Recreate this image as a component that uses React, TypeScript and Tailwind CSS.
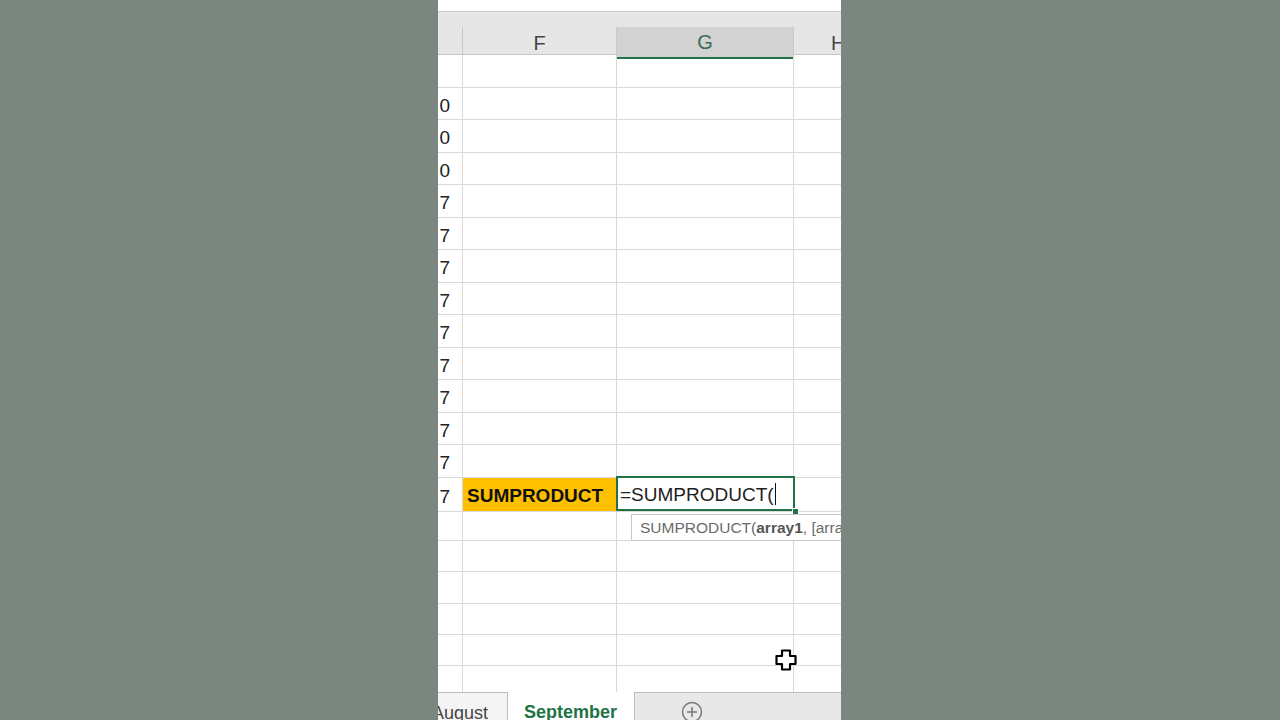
import React from "react";

const font = { fontFamily: '"Liberation Sans", Arial, sans-serif' };

const topRows = ["", "0", "0", "0", "7", "7", "7", "7", "7", "7", "7", "7", "7"];

function GridRow({ e, h }: { e?: string; h: string }) {
  return (
    <div className={`grid grid-cols-[25px_154px_177px_47px] ${h}`}>
      <div className="border-r border-b border-[#d9d9d9] flex items-center justify-end pr-[12px] pt-[5px] overflow-hidden text-[19px] text-[#222]">
        {e}
      </div>
      <div className="border-r border-b border-[#d9d9d9]" />
      <div className="border-r border-b border-[#d9d9d9]" />
      <div className="border-b border-[#d9d9d9]" />
    </div>
  );
}

function PlusCursor() {
  return (
    <svg width="24" height="24" viewBox="0 0 24 24" className="absolute left-[774px] top-[648px]">
      <path
        d="M8 2.5h8v5.5h5.5v8H16v5.5H8V16H2.5V8H8z"
        fill="#fff"
        stroke="#000"
        strokeWidth="2.2"
        strokeLinejoin="round"
      />
    </svg>
  );
}

export default function App() {
  return (
    <div className="relative w-[1280px] h-[720px] bg-[#7a867f] overflow-hidden" style={font}>
      <div className="ml-[438px] w-[403px] h-[720px] bg-white flex flex-col overflow-hidden">
        {/* top strip */}
        <div className="h-[11px] bg-white shrink-0" />
        {/* column header band */}
        <div className="h-[44px] shrink-0 bg-[#e6e6e6] border-t border-[#cdcdcd] flex flex-col">
          <div className="h-[15px]" />
          <div className="grid grid-cols-[25px_154px_177px_47px] h-[28px] border-b border-[#c4c4c4]">
            <div className="border-r border-[#c8c8c8]" />
            <div className="border-r border-[#c8c8c8] flex items-center justify-center text-[20px] text-[#444]">F</div>
            <div className="border-r border-[#c8c8c8] bg-[#d2d2d2] border-b-2 border-b-[#217346] flex items-center justify-center text-[20px] text-[#3d6b50]">
              G
            </div>
            <div className="flex items-center pl-[37px] text-[20px] text-[#444] whitespace-nowrap">H</div>
          </div>
        </div>

        {/* rows above */}
        {topRows.map((v, i) => (
          <GridRow key={i} e={v} h="h-[32.5px] shrink-0" />
        ))}

        {/* SUMPRODUCT row */}
        <div className="grid grid-cols-[25px_154px_177px_47px] h-[32.5px] shrink-0">
          <div className="border-r border-b border-[#d9d9d9] flex items-center justify-end pr-[12px] pt-[5px] text-[19px] text-[#222]">7</div>
          <div className="bg-[#ffc000] border-b border-[#d9d9d9] flex items-center pl-[4px] pt-[4px] text-[19px] font-bold text-[#111] whitespace-nowrap">
            SUMPRODUCT
          </div>
          <div className="relative border-b border-[#d9d9d9]">
            <div className="absolute -left-[1px] -top-[2px] w-[179px] h-[35px] border-2 border-[#217346] flex items-center pl-[2px] pt-[4px] text-[19px] text-[#222] whitespace-nowrap">
              =SUMPRODUCT(
              <span className="inline-block w-[1.5px] h-[22px] bg-[#111] ml-[1px] -mt-[3px]" />
            </div>
            <div className="absolute right-[-5px] bottom-[-4px] w-[7px] h-[7px] bg-[#217346] border border-white" />
            <div className="absolute left-[14px] top-[36px] h-[27px] w-[230px] bg-white border border-[#c6c6c6] flex items-center pl-[8px] pt-[2px] text-[15.5px] text-[#6b6b6b] whitespace-nowrap z-10">
              SUMPRODUCT(<span className="font-bold text-[#555]">array1</span>, [array2], ...)
            </div>
          </div>
          <div className="border-b border-[#d9d9d9]" />
        </div>

        {/* rows below */}
        {[0, 1, 2, 3, 4].map((i) => (
          <GridRow key={`b${i}`} h="h-[31.2px] shrink-0" />
        ))}
        <div className="grid grid-cols-[25px_154px_177px_47px] flex-1">
          <div className="border-r border-[#d9d9d9]" />
          <div className="border-r border-[#d9d9d9]" />
          <div className="border-r border-[#d9d9d9]" />
          <div />
        </div>

        {/* sheet tabs */}
        <div className="h-[28px] flex shrink-0">
          <div className="w-[70px] bg-[#f4f4f4] border-t border-r border-[#bdbdbd] flex items-start justify-end pr-[19px] pt-[9px] overflow-hidden text-[18px] leading-[22px] text-[#444] whitespace-nowrap">
            August
          </div>
          <div className="w-[126px] bg-white flex items-start pl-[16px] pt-[9px] text-[18px] leading-[22px] font-bold text-[#217346] whitespace-nowrap">
            September
          </div>
          <div className="flex-1 bg-[#e8e8e8] border-t border-l border-[#bdbdbd] flex items-start pl-[46px] pt-[8px]">
            <svg width="22" height="22" viewBox="0 0 22 22" className="shrink-0">
              <circle cx="11" cy="11" r="9.5" fill="none" stroke="#7a7a7a" strokeWidth="1.5" />
              <path d="M11 6v10M6 11h10" stroke="#7a7a7a" strokeWidth="1.6" />
            </svg>
          </div>
        </div>
      </div>
      <PlusCursor />
    </div>
  );
}
